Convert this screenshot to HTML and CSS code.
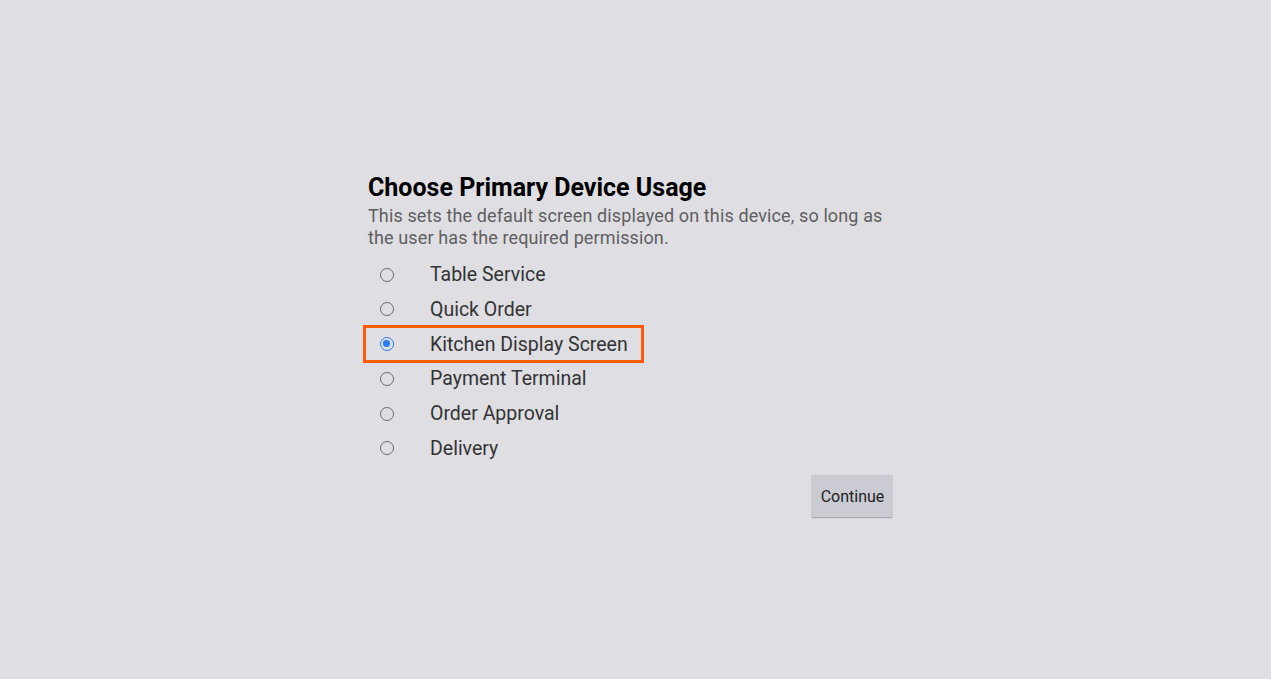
FILE: index.html
```html
<!DOCTYPE html>
<html>
<head>
<meta charset="utf-8">
<link rel="stylesheet" href="styles.css">
</head>
<body>
<main class="page">
  <section class="panel">
    <h1 class="title">Choose Primary Device Usage</h1>
    <p class="subtitle">This sets the default screen displayed on this device, so long as the user has the required permission.</p>
    <ul class="options">
      <li class="option"><span class="radio"></span><span class="label">Table Service</span></li>
      <li class="option"><span class="radio"></span><span class="label">Quick Order</span></li>
      <li class="option selected"><span class="radio checked"></span><span class="label">Kitchen Display Screen</span></li>
      <li class="option"><span class="radio"></span><span class="label">Payment Terminal</span></li>
      <li class="option"><span class="radio"></span><span class="label">Order Approval</span></li>
      <li class="option"><span class="radio"></span><span class="label">Delivery</span></li>
    </ul>
    <div class="actions">
      <button class="btn">Continue</button>
    </div>
  </section>
</main>
</body>
</html>
```
FILE: styles.css
```css
html, body {
  margin: 0;
  padding: 0;
}
body {
  background: #dedee3;
  font-family: Roboto, "Liberation Sans", sans-serif;
  width: 1271px;
  height: 679px;
  overflow: hidden;
}
.page {
  height: 679px;
  display: flex;
  justify-content: center;
  padding-top: 172px;
  box-sizing: border-box;
}
.panel {
  width: 525px;
  margin-left: -10px;
}
.title {
  margin: 0;
  font-size: 25px;
  font-weight: 700;
  color: #000;
  line-height: 32px;
}
.subtitle {
  margin: 1px 0 0 0;
  font-size: 18px;
  letter-spacing: 0.12px;
  line-height: 22px;
  color: #5f5f5f;
}
.options {
  list-style: none;
  margin: 9.5px 0 0 0;
  padding: 0;
  display: flex;
  flex-direction: column;
  gap: 2.8px;
}
.option {
  display: flex;
  align-items: center;
  width: fit-content;
  height: 32px;
  margin-left: -2px;
  padding: 0 13px 0 14px;
}
.option.selected {
  outline: 3px solid #ff5c0a;
}
.radio {
  width: 14px;
  height: 14px;
  border: 1.6px solid #6c6c6c;
  border-radius: 50%;
  box-sizing: border-box;
  flex: none;
  position: relative;
}
.radio.checked {
  border-color: #2d7ff0;
}
.radio.checked::after {
  content: "";
  position: absolute;
  left: 2.2px;
  top: 2.2px;
  width: 6.4px;
  height: 6.4px;
  border-radius: 50%;
  background: #2d7ff0;
}
.label {
  margin-left: 36px;
  font-size: 19.5px;
  color: #333;
}
.actions {
  display: flex;
  justify-content: flex-end;
  margin-top: 11px;
}
.btn {
  width: 82px;
  height: 42px;
  border: none;
  background: #cbcbd3;
  box-shadow: 0 2px 1px -1px #a9a9b0;
  font-family: Roboto, "Liberation Sans", sans-serif;
  font-size: 16px;
  color: #1e1e1e;
  padding: 0 0 0 1px;
}
```
